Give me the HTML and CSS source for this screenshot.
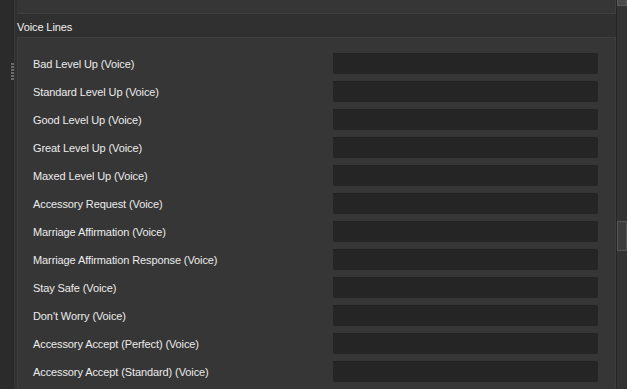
FILE: index.html
```html
<!DOCTYPE html>
<html lang="en">
<head>
    <meta charset="UTF-8">
    <title>Voice Lines</title>
    <link rel="stylesheet" href="styles.css">
</head>
<body>

<div class="window">
    <!-- Splitter on the left -->
    <div class="splitter">
        <div class="grip">
            <span></span><span></span><span></span><span></span><span></span><span></span>
        </div>
    </div>

    <div class="content">
        <div class="prev-panel"></div>

        <div class="section-title">Voice Lines</div>

        <div class="group-box">
            <div class="field-row"><label>Bad Level Up (Voice)</label><div class="field"></div></div>
            <div class="field-row"><label>Standard Level Up (Voice)</label><div class="field"></div></div>
            <div class="field-row"><label>Good Level Up (Voice)</label><div class="field"></div></div>
            <div class="field-row"><label>Great Level Up (Voice)</label><div class="field"></div></div>
            <div class="field-row"><label>Maxed Level Up (Voice)</label><div class="field"></div></div>
            <div class="field-row"><label>Accessory Request (Voice)</label><div class="field"></div></div>
            <div class="field-row"><label>Marriage Affirmation (Voice)</label><div class="field"></div></div>
            <div class="field-row"><label>Marriage Affirmation Response (Voice)</label><div class="field"></div></div>
            <div class="field-row"><label>Stay Safe (Voice)</label><div class="field"></div></div>
            <div class="field-row"><label>Don't Worry (Voice)</label><div class="field"></div></div>
            <div class="field-row"><label>Accessory Accept (Perfect) (Voice)</label><div class="field"></div></div>
            <div class="field-row"><label>Accessory Accept (Standard) (Voice)</label><div class="field"></div></div>
        </div>
    </div>

    <!-- Vertical scrollbar -->
    <div class="scrollbar">
        <div class="scroll-top"></div>
        <div class="scroll-thumb"></div>
    </div>
</div>

</body>
</html>
```

FILE: styles.css
```css
body {
    margin: 0;
    background-color: #2f2f2f;
    font-family: "Liberation Sans", Arial, sans-serif;
    font-size: 11px;
    color: #e6e6e6;
    overflow: hidden;
}

.window {
    display: flex;
    height: 389px;
    width: 627px;
}

.splitter {
    width: 13px;
    background-color: #2b2b2b;
    border-right: 1px solid #262626;
    position: relative;
}

.grip {
    position: absolute;
    left: 11px;
    top: 63px;
    display: flex;
    flex-direction: column;
    gap: 1px;
}

.grip span {
    width: 3px;
    height: 2px;
    background-color: #6a6a6a;
}

.content {
    flex: 1;
    display: flex;
    flex-direction: column;
    background-color: #303030;
    border-left: 1px solid #3a3a3a;
    padding-left: 2px;
}

.prev-panel {
    height: 13px;
    background-color: #363636;
    border: 1px solid #3f3f3f;
    border-top: none;
    border-left: none;
}

.section-title {
    height: 23px;
    line-height: 27px;
    color: #f0f0f0;
    letter-spacing: -0.1px;
}

.group-box {
    flex: 1;
    background-color: #363636;
    border-top: 1px solid #3e3e3e;
    border-left: 1px solid #3e3e3e;
    border-right: 1px solid #3e3e3e;
    padding: 15px 17px 0 15px;
    display: flex;
    flex-direction: column;
    gap: 7px;
}

.field-row {
    display: flex;
    align-items: center;
    height: 21px;
}

.field-row label {
    width: 300px;
    color: #ececec;
    letter-spacing: -0.1px;
}

.field {
    flex: 1;
    height: 21px;
    background-color: #252525;
    border-radius: 2px;
    box-shadow: inset 0 1px 0 #222;
}

.scrollbar {
    width: 10px;
    background-color: #333333;
    border-left: 1px solid #262626;
    position: relative;
}

.scroll-top {
    height: 5px;
    background-color: #4a4a4a;
    border: 1px solid #5a5a5a;
    border-top: none;
}

.scroll-thumb {
    position: absolute;
    top: 221px;
    left: 0;
    right: 0;
    height: 28px;
    background-color: #3c3c3c;
    border: 1px solid #555;
}
```
